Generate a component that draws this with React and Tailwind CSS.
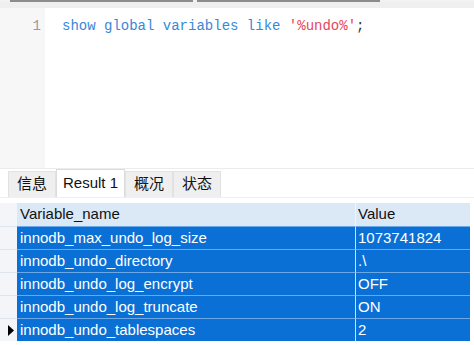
const rows = [
  { name: "innodb_max_undo_log_size", value: "1073741824" },
  { name: "innodb_undo_directory", value: ".\\" },
  { name: "innodb_undo_log_encrypt", value: "OFF" },
  { name: "innodb_undo_log_truncate", value: "ON" },
  { name: "innodb_undo_tablespaces", value: "2", current: true },
];

const tabs = ["信息", "Result 1", "概况", "状态"];

const App = () => {
  return (
    <div
      className="w-[474px] h-[345px] bg-white overflow-hidden flex flex-col"
      style={{ fontFamily: '"Liberation Sans", "Noto Sans CJK SC", sans-serif' }}
    >
      {/* top strip */}
      <div className="h-[2px] flex bg-[#f2f2f2]">
        <div className="ml-[10px] w-[183px] bg-[#8c8c8c]" />
        <div className="ml-[4px] w-[183px] bg-[#8c8c8c]" />
      </div>
      <div className="h-[6px] bg-[#efefef]" />

      {/* editor */}
      <div className="h-[161px] flex border-b border-[#ececec]">
        <div className="w-[45px] bg-[#f7f7f7] pt-[8px] pr-[4px] text-right text-[14px] leading-[20px] text-[#9a9a9a]" style={{ fontFamily: '"Liberation Mono", monospace' }}>
          1
        </div>
        <div className="pl-[17px] pt-[8px] text-[14px] leading-[20px] text-[#3a87d8]" style={{ fontFamily: '"Liberation Mono", monospace' }}>
          show global variables like <span className="text-[#e8465e]">'%undo%'</span>
          <span className="text-[#333]">;</span>
        </div>
      </div>

      {/* tabs */}
      <div className="flex items-end h-[29px] pl-[8px] pt-[2px] border-b border-[#f0f0f0]">
        {tabs.map((t, i) =>
          i === 1 ? (
            <div key={t} className="h-[28px] w-[69px] bg-white border-x border-t border-[#dcdcdc] flex items-center justify-center text-[15px] text-[#111]">
              {t}
            </div>
          ) : (
            <div key={t} className="h-[26px] w-[48px] bg-[#efefef] border-x border-t border-[#e2e2e2] flex items-center justify-center text-[15px] text-[#111]">
              {t}
            </div>
          )
        )}
      </div>

      {/* table */}
      <div className="mt-[5px] flex flex-col w-[470px] text-[15px]">
        <div className="flex h-[23px]">
          <div className="w-[17px] bg-[#f3f5f8]" />
          <div className="w-[339px] bg-[#dbe9f7] border-r border-[#eef4fb] pl-[3px] flex items-center text-[#111]">
            Variable_name
          </div>
          <div className="flex-1 bg-[#dbe9f7] pl-[2px] flex items-center text-[#111]">Value</div>
        </div>
        {rows.map(r => (
          <div key={r.name} className="flex h-[23px]">
            <div className="w-[17px] bg-[#f3f5f8] border-t border-[#dfe5ec] flex items-center pl-[8px]">
              {r.current && (
                <svg width="6" height="11" viewBox="0 0 6 11">
                  <path d="M0 0 L6 5.5 L0 11 Z" fill="#000" />
                </svg>
              )}
            </div>
            <div className="w-[339px] bg-[#0a70d6] border-t border-[#6aa8e8] border-r border-r-[#cfe2f6] pl-[3px] flex items-center text-white">
              {r.name}
            </div>
            <div className="flex-1 bg-[#0a70d6] border-t border-[#6aa8e8] pl-[2px] flex items-center text-white">
              {r.value}
            </div>
          </div>
        ))}
      </div>
    </div>
  );
};

export default App;
